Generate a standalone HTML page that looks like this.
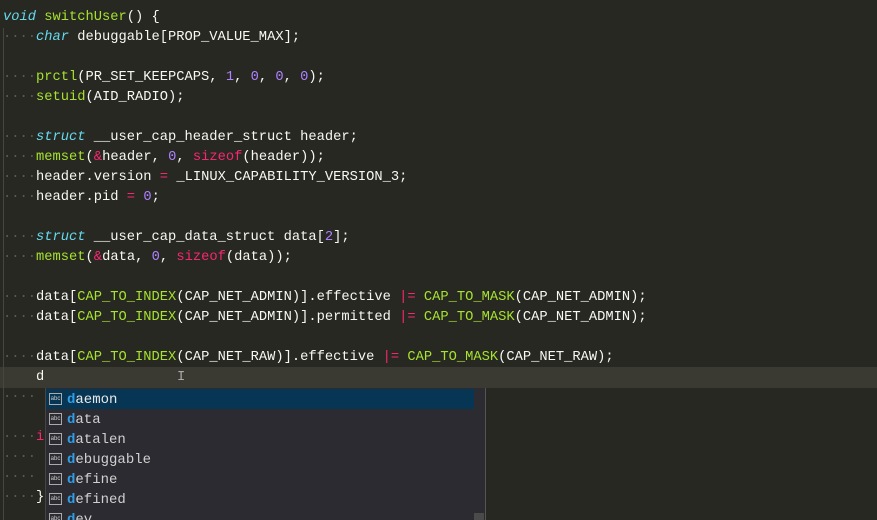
<!DOCTYPE html>
<html><head><meta charset="utf-8"><style>
html,body{margin:0;width:877px;height:520px;overflow:hidden}
body{background:#272822;position:relative;font-family:"Liberation Mono",monospace;font-size:13.75px;color:#f8f8f2}
.w{position:absolute;left:0;top:1px;width:877px;height:520px}
.l{position:absolute;left:3px;height:20px;line-height:20px;white-space:pre}
.k{color:#66d9ef;font-style:italic}.f{color:#a6e22e}.n{color:#ae81ff}.r{color:#f92672}.d{color:#5a5a50}
.cur{position:absolute;left:0;top:367px;width:877px;height:21px;background:#3a3a32}
.g{position:absolute;left:3px;top:28px;width:1px;height:492px;background:#464640}
.pop{position:absolute;left:45px;top:388px;width:439px;height:132px;background:#2c2b31;border-left:1px solid #444;border-right:1px solid #555}
.it{position:absolute;left:0;width:428px;height:20px;line-height:20px;color:#d0d0d0;white-space:pre;font-size:14px}
.it.sel{background:#073655;color:#e8e8e8}
.ic{position:absolute;left:3px;top:4px;width:11px;height:10px;border:1px solid #aaa;font-size:6px;line-height:10px;text-align:center;color:#ccc;font-family:"Liberation Sans",sans-serif}
.it span.t{position:absolute;left:21px;top:1px}
.it b{color:#2f9ee8;font-weight:bold}
.sb{position:absolute;left:428px;top:125px;width:10px;height:8px;background:#4a4a4a}
</style></head><body>
<div class="cur"></div>
<div class="g"></div>
<div class="w">
<div class="l" style="top:-13px;left:60px;color:#75715e">/</div>
<div class="l" style="top:7px"><span class="k">void</span> <span class="f">switchUser</span>() {</div>
<div class="l" style="top:27px"><span class="d">····</span><span class="k">char</span> debuggable[PROP_VALUE_MAX];</div>
<div class="l" style="top:67px"><span class="d">····</span><span class="f">prctl</span>(PR_SET_KEEPCAPS, <span class="n">1</span>, <span class="n">0</span>, <span class="n">0</span>, <span class="n">0</span>);</div>
<div class="l" style="top:87px"><span class="d">····</span><span class="f">setuid</span>(AID_RADIO);</div>
<div class="l" style="top:127px"><span class="d">····</span><span class="k">struct</span> __user_cap_header_struct header;</div>
<div class="l" style="top:147px"><span class="d">····</span><span class="f">memset</span>(<span class="r">&amp;</span>header, <span class="n">0</span>, <span class="r">sizeof</span>(header));</div>
<div class="l" style="top:167px"><span class="d">····</span>header.version <span class="r">=</span> _LINUX_CAPABILITY_VERSION_3;</div>
<div class="l" style="top:187px"><span class="d">····</span>header.pid <span class="r">=</span> <span class="n">0</span>;</div>
<div class="l" style="top:227px"><span class="d">····</span><span class="k">struct</span> __user_cap_data_struct data[<span class="n">2</span>];</div>
<div class="l" style="top:247px"><span class="d">····</span><span class="f">memset</span>(<span class="r">&amp;</span>data, <span class="n">0</span>, <span class="r">sizeof</span>(data));</div>
<div class="l" style="top:287px"><span class="d">····</span>data[<span class="f">CAP_TO_INDEX</span>(CAP_NET_ADMIN)].effective <span class="r">|=</span> <span class="f">CAP_TO_MASK</span>(CAP_NET_ADMIN);</div>
<div class="l" style="top:307px"><span class="d">····</span>data[<span class="f">CAP_TO_INDEX</span>(CAP_NET_ADMIN)].permitted <span class="r">|=</span> <span class="f">CAP_TO_MASK</span>(CAP_NET_ADMIN);</div>
<div class="l" style="top:347px"><span class="d">····</span>data[<span class="f">CAP_TO_INDEX</span>(CAP_NET_RAW)].effective <span class="r">|=</span> <span class="f">CAP_TO_MASK</span>(CAP_NET_RAW);</div>
<div class="l" style="top:367px"><span class="d">    </span>d</div>
<div class="l" style="top:367px;left:177px;color:#aaa">I</div>
<div class="l" style="top:387px"><span class="d">····</span></div>
<div class="l" style="top:427px"><span class="d">····</span><span class="r">i</span></div>
<div class="l" style="top:447px"><span class="d">····</span></div>
<div class="l" style="top:467px"><span class="d">····</span></div>
<div class="l" style="top:487px"><span class="d">····</span>}</div>
</div>
<div class="pop">
<div class="it sel" style="top:1px"><span class="ic">abc</span><span class="t"><b>d</b>aemon</span></div>
<div class="it" style="top:21px"><span class="ic">abc</span><span class="t"><b>d</b>ata</span></div>
<div class="it" style="top:41px"><span class="ic">abc</span><span class="t"><b>d</b>atalen</span></div>
<div class="it" style="top:61px"><span class="ic">abc</span><span class="t"><b>d</b>ebuggable</span></div>
<div class="it" style="top:81px"><span class="ic">abc</span><span class="t"><b>d</b>efine</span></div>
<div class="it" style="top:101px"><span class="ic">abc</span><span class="t"><b>d</b>efined</span></div>
<div class="it" style="top:121px"><span class="ic">abc</span><span class="t"><b>d</b>ev</span></div>
<div class="sb"></div>
</div>
</body></html>
